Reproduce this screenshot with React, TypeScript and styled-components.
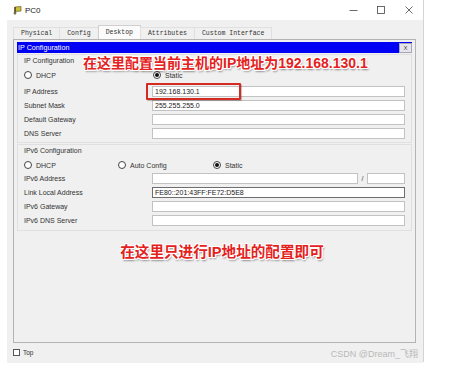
import React from "react";
import styled, { createGlobalStyle } from "styled-components";

const GlobalStyle = createGlobalStyle`
  html, body {
    margin: 0;
    padding: 0;
    background: #ffffff;
  }
  body {
    font-family: "Liberation Sans", Arial, sans-serif;
  }
`;

const Page = styled.div`
  width: 474px;
  height: 365px;
  background: #ffffff;
  overflow: hidden;
`;

const Window = styled.div`
  margin-left: 7px;
  width: 416px;
  height: 362px;
  border-right: 1px solid #d4d4d4;
  display: flex;
  flex-direction: column;
`;

const TitleBar = styled.div`
  height: 20px;
  background: #ffffff;
  display: flex;
  align-items: center;
  padding-left: 6px;
`;

const Title = styled.span`
  margin-left: 3px;
  font-size: 8px;
  color: #222;
`;

const Spacer = styled.div`
  flex: 1;
`;

const WinButton = styled.div`
  width: 28px;
  height: 20px;
  display: flex;
  align-items: center;
  justify-content: center;
`;

const Body = styled.div`
  flex: 1;
  background: #f0f0f0;
  padding: 5px 7px 0 6px;
  display: flex;
  flex-direction: column;
`;

const TabBar = styled.div`
  display: flex;
  align-items: flex-end;
  height: 14px;
`;

const Tab = styled.div<{ $active?: boolean }>`
  height: ${(p) => (p.$active ? 14 : 12)}px;
  padding: 0 7px;
  display: flex;
  align-items: center;
  font-family: "Liberation Mono", "Courier New", monospace;
  font-size: 6.5px;
  color: #333;
  background: ${(p) => (p.$active ? "#fbfbfb" : "#f0f0f0")};
  border: 1px solid ${(p) => (p.$active ? "#cfcfcf" : "#e0e0e0")};
  border-bottom: none;
  margin-right: -1px;
  box-sizing: border-box;
`;

const Panel = styled.div`
  height: 304px;
  border: 1px solid #b4b4b4;
  padding: 2px 3px 0 3px;
  box-sizing: border-box;
  display: flex;
  flex-direction: column;
`;

const Header = styled.div`
  height: 11px;
  background: #0000f5;
  display: flex;
  align-items: center;
  justify-content: space-between;
  padding-left: 1px;
`;

const HeaderTitle = styled.span`
  color: #ffffff;
  font-size: 7.2px;
`;

const CloseBox = styled.div`
  width: 13px;
  height: 10px;
  box-sizing: border-box;
  background: #e6e6ea;
  border: 1px solid #a6a6b6;
  font-size: 6px;
  color: #444;
  display: flex;
  align-items: center;
  justify-content: center;
`;

const Group = styled.div<{ $top: number; $bottom: number }>`
  position: relative;
  margin-top: ${(p) => p.$top}px;
  border: 1px solid #e0e0e0;
  padding: 0 6px ${(p) => p.$bottom}px 6px;
  display: flex;
  flex-direction: column;
`;

const Legend = styled.div`
  height: 10px;
  display: flex;
  align-items: center;
  font-size: 7px;
  color: #333;
`;

const RadioRow = styled.div<{ $after: number }>`
  height: 12px;
  margin-top: 4px;
  margin-bottom: ${(p) => p.$after}px;
  display: flex;
  align-items: center;
`;

const RadioItem = styled.div<{ $width?: number }>`
  width: ${(p) => (p.$width ? `${p.$width}px` : "auto")};
  display: flex;
  align-items: center;
  gap: 4px;
  font-size: 7px;
  color: #333;
`;

const RadioCircle = styled.span<{ $checked?: boolean }>`
  width: 8px;
  height: 8px;
  box-sizing: border-box;
  border-radius: 50%;
  border: 1px solid #444;
  background: #fff;
  display: flex;
  align-items: center;
  justify-content: center;
  &::after {
    content: "";
    width: 4px;
    height: 4px;
    border-radius: 50%;
    background: ${(p) => (p.$checked ? "#111" : "transparent")};
  }
`;

const FieldRow = styled.div`
  height: 14px;
  display: flex;
  align-items: center;
`;

const Label = styled.span`
  width: 128px;
  flex: none;
  font-size: 7px;
  color: #333;
`;

const Input = styled.div<{ $dark?: boolean; $width?: number }>`
  ${(p) => (p.$width ? `width: ${p.$width}px; flex: none;` : "flex: 1;")}
  height: 11px;
  box-sizing: border-box;
  background: #ffffff;
  border: 1px solid ${(p) => (p.$dark ? "#6e6e6e" : "#c2c2c2")};
  display: flex;
  align-items: center;
  padding-left: 2px;
  font-size: 7px;
  color: #222;
`;

const Slash = styled.span`
  width: 9px;
  text-align: center;
  font-size: 7px;
  color: #444;
`;

const Mark = styled.div`
  position: absolute;
  left: 128px;
  top: 28px;
  width: 95px;
  height: 17px;
  box-sizing: border-box;
  border: 2px solid #d42a22;
  border-radius: 1px;
  box-shadow: 1px 1px 1px rgba(0, 0, 0, 0.25);
`;

const outline = `
  -1px -1px 0 #fff, 1px -1px 0 #fff, -1px 1px 0 #fff, 1px 1px 0 #fff,
  0 -1px 0 #fff, 0 1px 0 #fff, -1px 0 0 #fff, 1px 0 0 #fff,
  1px 2px 2px rgba(0, 0, 0, 0.45)
`;

const Note = styled.div`
  font-family: "Liberation Sans", "Noto Sans CJK SC", sans-serif;
  font-weight: 700;
  color: #e4211c;
  text-shadow: ${outline};
  white-space: nowrap;
`;

const TopNote = styled(Note)`
  position: absolute;
  left: 65px;
  top: 0;
  font-size: 14px;
  line-height: 16px;
`;

const BottomNote = styled(Note)`
  margin-top: 12px;
  align-self: center;
  margin-left: 15px;
  font-size: 14.6px;
  line-height: 18px;
`;

const Footer = styled.div`
  height: 20px;
  display: flex;
  align-items: center;
  justify-content: space-between;
  margin-right: -2px;
`;

const CheckLabel = styled.div`
  display: flex;
  align-items: center;
  gap: 3px;
  font-size: 6.5px;
  color: #333;
  padding-bottom: 1px;
`;

const CheckBox = styled.span`
  width: 7px;
  height: 7px;
  box-sizing: border-box;
  border: 1px solid #555;
  background: #fff;
`;

const Watermark = styled.span`
  font-family: "Liberation Sans", "Noto Sans CJK SC", sans-serif;
  font-size: 9px;
  color: #b9b9b9;
`;

function PcIcon() {
  return (
    <svg width="9" height="9" viewBox="0 0 9 9">
      <path d="M2 1 L8 0.5 L8 5 L2 5.5 Z" fill="#c9c23a" stroke="#6b5a22" strokeWidth="0.7" />
      <path d="M2 1 L2 8.5" stroke="#5a3a1a" strokeWidth="1.4" />
      <path d="M0.5 7 L3.5 7" stroke="#3c7a2a" strokeWidth="1" />
    </svg>
  );
}

export default function App() {
  return (
    <Page>
      <GlobalStyle />
      <Window>
        <TitleBar>
          <PcIcon />
          <Title>PC0</Title>
          <Spacer />
          <WinButton>
            <svg width="9" height="9" viewBox="0 0 9 9">
              <path d="M0.5 4.5 H8.5" stroke="#444" strokeWidth="0.8" />
            </svg>
          </WinButton>
          <WinButton>
            <svg width="8" height="8" viewBox="0 0 8 8">
              <rect x="0.5" y="0.5" width="7" height="7" fill="none" stroke="#444" strokeWidth="0.8" />
            </svg>
          </WinButton>
          <WinButton>
            <svg width="8" height="8" viewBox="0 0 8 8">
              <path d="M0.5 0.5 L7.5 7.5 M7.5 0.5 L0.5 7.5" stroke="#444" strokeWidth="0.8" />
            </svg>
          </WinButton>
        </TitleBar>
        <Body>
          <TabBar>
            <Tab>Physical</Tab>
            <Tab>Config</Tab>
            <Tab $active>Desktop</Tab>
            <Tab>Attributes</Tab>
            <Tab>Custom Interface</Tab>
          </TabBar>
          <Panel>
            <Header>
              <HeaderTitle>IP Configuration</HeaderTitle>
              <CloseBox>X</CloseBox>
            </Header>
            <Group $top={1} $bottom={2}>
              <Legend>IP Configuration</Legend>
              <RadioRow $after={3}>
                <RadioItem $width={129}>
                  <RadioCircle />
                  DHCP
                </RadioItem>
                <RadioItem>
                  <RadioCircle $checked />
                  Static
                </RadioItem>
              </RadioRow>
              <FieldRow>
                <Label>IP Address</Label>
                <Input>192.168.130.1</Input>
              </FieldRow>
              <FieldRow>
                <Label>Subnet Mask</Label>
                <Input>255.255.255.0</Input>
              </FieldRow>
              <FieldRow>
                <Label>Default Gateway</Label>
                <Input />
              </FieldRow>
              <FieldRow>
                <Label>DNS Server</Label>
                <Input />
              </FieldRow>
              <Mark />
              <TopNote>在这里配置当前主机的IP地址为192.168.130.1</TopNote>
            </Group>
            <Group $top={1} $bottom={3}>
              <Legend>IPv6 Configuration</Legend>
              <RadioRow $after={0}>
                <RadioItem $width={94}>
                  <RadioCircle />
                  DHCP
                </RadioItem>
                <RadioItem $width={95}>
                  <RadioCircle />
                  Auto Config
                </RadioItem>
                <RadioItem>
                  <RadioCircle $checked />
                  Static
                </RadioItem>
              </RadioRow>
              <FieldRow>
                <Label>IPv6 Address</Label>
                <Input />
                <Slash>/</Slash>
                <Input $width={38} />
              </FieldRow>
              <FieldRow>
                <Label>Link Local Address</Label>
                <Input $dark>FE80::201:43FF:FE72:D5E8</Input>
              </FieldRow>
              <FieldRow>
                <Label>IPv6 Gateway</Label>
                <Input />
              </FieldRow>
              <FieldRow>
                <Label>IPv6 DNS Server</Label>
                <Input />
              </FieldRow>
            </Group>
            <BottomNote>在这里只进行IP地址的配置即可</BottomNote>
          </Panel>
          <Footer>
            <CheckLabel>
              <CheckBox />
              Top
            </CheckLabel>
            <Watermark>CSDN @Dream_飞翔</Watermark>
          </Footer>
        </Body>
      </Window>
    </Page>
  );
}
